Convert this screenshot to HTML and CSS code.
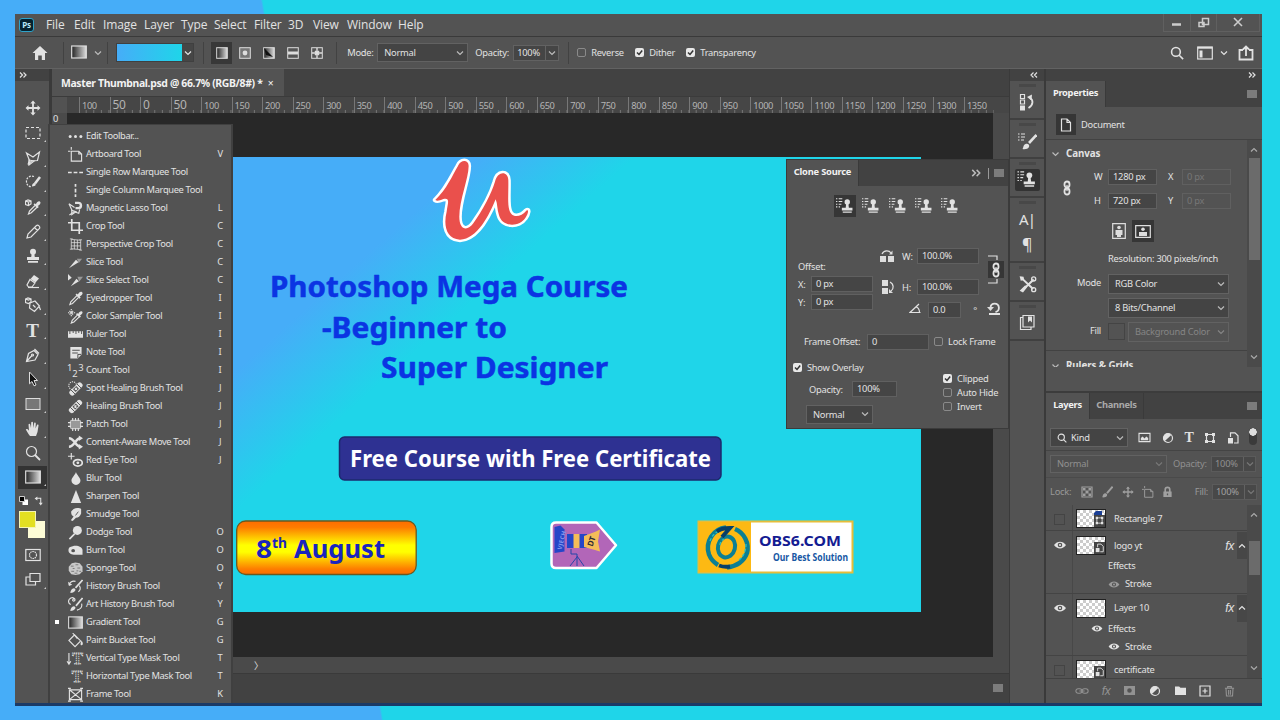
FILE: index.html
```html
<!DOCTYPE html>
<html lang="en">
<head>
  <meta charset="UTF-8" />
  <meta name="viewport" content="width=device-width, initial-scale=1.0" />
  <title>Master Thumbnal.psd</title>
  <link rel="stylesheet" href="styles.css">
</head>
<body>

<!-- Icon sprite -->
<svg class="sprite" width="0" height="0">
  <defs>
    <linearGradient id="gBw"><stop offset="0" stop-color="#222"/><stop offset="1" stop-color="#ddd"/></linearGradient>
    <pattern id="checker" width="6" height="6" patternUnits="userSpaceOnUse"><rect width="6" height="6" fill="#fff"/><path d="M0 0h3v3H0zM3 3h3v3H3z" fill="#ccc"/></pattern>
  </defs>
  <symbol id="chev" viewBox="0 0 8 8"><path d="M1 2.5l3 3 3-3" class="ln"/></symbol>
  <symbol id="up" viewBox="0 0 8 8"><path d="M1 5.5l3-3 3 3" class="ln"/></symbol>
  <symbol id="dbl-r" viewBox="0 0 8 8"><path d="M1 1.5L3.5 4 1 6.5M4.5 1.5L7 4 4.5 6.5" class="ln"/></symbol>
  <symbol id="dbl-l" viewBox="0 0 8 8"><path d="M3.5 1.5L1 4l2.5 2.5M7 1.5L4.5 4 7 6.5" class="ln"/></symbol>
  <symbol id="burger" viewBox="0 0 10 8"><path d="M0 1h10M0 3h10M0 5h10M0 7h10" class="ln"/></symbol>
  <symbol id="home" viewBox="0 0 16 16"><path d="M8 1l7.5 7H13v7H9.800v-4.500H6.200V15H3V8H.5z" class="fl"/></symbol>
  <symbol id="search" viewBox="0 0 16 16"><circle cx="6.8" cy="6.8" r="5" class="ln2"/><path d="M10.500 10.500L15 15" class="ln2"/></symbol>
  <symbol id="workspace" viewBox="0 0 16 16"><rect x=".7" y="2" width="14.6" height="12" class="ln"/><path d="M.7 2.8h14.6" class="ln2"/><path d="M2.500 5.500h3v7h-3z" class="fl"/></symbol>
  <symbol id="share" viewBox="0 0 16 16"><path d="M5 5H1.500v9.500h13V5H11M8 11V1.500M5 4.500l3-3 3 3" class="ln2"/></symbol>
  <symbol id="gradient" viewBox="0 0 16 16"><rect x=".7" y="2" width="14.6" height="12" fill="url(#gBw)" stroke="#ddd" stroke-width="1.2"/></symbol>
  <symbol id="move" viewBox="0 0 16 16"><path d="M8 2v12M2 8h12" class="ln2"/><path d="M8 .5l2.700 3H5.300zM8 15.500l2.700-3H5.300zM.5 8l3-2.700v5.400zM15.500 8l-3-2.700v5.400z" class="fl"/></symbol>
  <symbol id="marquee" viewBox="0 0 16 16"><rect x="1" y="2.5" width="14" height="11" class="ln" stroke-dasharray="3 2"/></symbol>
  <symbol id="lasso" viewBox="0 0 16 16"><path d="M1.500 3L8 7l6.500-5-2 8.500-6 .5L3 14.500l1.500-4z" class="ln"/><path d="M4 10l5 1-5 4z" class="ln"/></symbol>
  <symbol id="quicksel" viewBox="0 0 16 16"><path d="M9 2.500C5 1 1 4 1.500 8s3 5 5.500 4.500" class="ln" stroke-dasharray="2 1.2"/><path d="M7 12.500c0-2.500 1.500-4 3-3.200s.8 3.200-3 3.200z" class="fl"/><path d="M15 3L10 9.500" class="ln3"/></symbol>
  <symbol id="dropper" viewBox="0 0 16 16"><path d="M9.500 5L3 11.500 2 14.500l2.800-1.200L11.300 6.800" class="ln"/><path d="M8 4l1.300-1.300 1.200 1.100C11.500 1.500 13.500 0 15 1.200s0 3.500-2.500 4.600l1 1.200-1.300 1.200z" class="fl"/></symbol>
  <symbol id="sampler" viewBox="0 0 16 16"><path d="M10 6.500L4.500 12l-1 3 2.800-1.200L12 8.300" class="ln"/><path d="M8.500 5.500l1.300-1.300 1 1C12 3 13.700 1.700 15 2.700s0 3-2.200 4.200l1 1-1.300 1.300z" class="fl"/><path d="M3.500 0v8M0 4h8M1.500 2l4 4M5.500 2l-4 4" class="ln" stroke-dasharray="1.3 .8"/></symbol>
  <symbol id="dropper3d" viewBox="0 0 16 16"><path d="M10 6.500L4.500 12l-1 3 2.800-1.200L12 8.300" class="ln"/><path d="M8.500 5.500l1.300-1.300 1 1C12 3 13.700 1.700 15 2.700s0 3-2.200 4.200l1 1-1.300 1.300z" class="fl"/><path d="M.5 2l2.500-1 3 1v3L3.500 6.500.5 5.500zM.5 2l3 1 2.500-1M3.500 3v3" class="ln"/></symbol>
  <symbol id="pencil" viewBox="0 0 16 16"><path d="M2 14l1-4 8.500-8.500c1.500-1 4 1 3 3L6 13zM9.500 3.500l3 3" class="ln"/></symbol>
  <symbol id="stamp" viewBox="0 0 16 16"><circle cx="8" cy="3.8" r="3" class="fl"/><path d="M6.800 5h2.400l.6 4H14v3H2V9h4.200zM3 13h10v1.800H3z" class="fl"/></symbol>
  <symbol id="eraser" viewBox="0 0 16 16"><path d="M9 2l5 3.500-3.500 4-5-3.500z" class="fl"/><path d="M5 6.500l5 3.500-3 4H3.500L2 12z" class="ln"/><path d="M3 14.500h11" class="ln"/></symbol>
  <symbol id="bucket3d" viewBox="0 0 16 16"><path d="M5 6l5-2 4.500 5-5 5.500L4.500 11zM8 8l2.500 2.500M14 9l1.500 4" class="ln"/><path d="M.5 2l2.500-1 3 1v3L3.500 6.500.5 5.500zM.5 2l3 1 2.500-1" class="ln"/></symbol>
  <symbol id="pen" viewBox="0 0 16 16"><path d="M1.500 14.500l2-8L9 3.500l4 4-3 5.500zM1.500 14.500l5.500-6M9.500 2l4.500 4.500" class="ln"/><circle cx="7.5" cy="8" r="1" class="ln"/></symbol>
  <symbol id="arrow" viewBox="0 0 16 16"><path d="M4.500 1l8 8.500H9l2 4.500-2 .8-2-4.300-2.500 2.300z" fill="#111" stroke="#ddd"/></symbol>
  <symbol id="rect" viewBox="0 0 16 16"><rect x="1" y="2.5" width="14" height="11" fill="#777" stroke="#ddd"/></symbol>
  <symbol id="hand" viewBox="0 0 16 16"><path d="M5 15C3 12.500 2 10.500.8 8.500 1.500 7.500 3 8 4 9.800L3.500 3.500c.5-1 1.600-.8 1.800.2L6 7l.2-5.500c.4-1 1.600-1 1.800 0L8.300 7l.9-5c.5-.8 1.600-.5 1.600.5L10.500 7.500l1.600-3.700c.7-.6 1.600 0 1.400.9L12.500 11l-1.500 4z" class="fl"/></symbol>
  <symbol id="magnify" viewBox="0 0 16 16"><circle cx="6.5" cy="6.5" r="5" class="ln"/><path d="M10 10l5 5" class="ln2"/></symbol>
  <symbol id="mask" viewBox="0 0 16 16"><rect x=".8" y="2.5" width="14.4" height="11" class="ln"/><circle cx="8" cy="8" r="3.5" class="ln" stroke-dasharray="1.5 .7"/></symbol>
  <symbol id="screens" viewBox="0 0 16 16"><path d="M5 1.500h10v8H5zM4.500 5H1v8h9.500V10" class="ln"/></symbol>
  <symbol id="dots" viewBox="0 0 16 16"><circle cx="2.3" cy="8" r="1.6" class="fl"/><circle cx="8" cy="8" r="1.6" class="fl"/><circle cx="13.7" cy="8" r="1.6" class="fl"/></symbol>
  <symbol id="artboard" viewBox="0 0 16 16"><path d="M3.500 4.500h8l3 3v7.500h-11zM11.500 4.500v3h3M0 4.500h2.500M3.500 0v3" class="ln"/></symbol>
  <symbol id="row" viewBox="0 0 16 16"><path d="M0 8h4M6 8h4M12 8h4" class="ln2"/></symbol>
  <symbol id="col" viewBox="0 0 16 16"><path d="M8 1v3M8 6v4M8 12v3" class="ln2"/></symbol>
  <symbol id="maglasso" viewBox="0 0 16 16"><path d="M1 3l6 4M4.500 10.500L1 3M12.500 9l-1 4-5-1.500-5 3.500" class="ln"/><path d="M4 10l4.500 1.500-4.500 3z" class="ln"/><path d="M7.500 2H11a2.800 2.800 0 010 5.600H8" class="ln3"/></symbol>
  <symbol id="crop" viewBox="0 0 16 16"><path d="M4 0v12h12M0 4h12v12" class="ln2"/></symbol>
  <symbol id="persp" viewBox="0 0 16 16"><path d="M3.500 2.500l10 1v10l-10-1zM2 2h3M12 3h3M2 13h3M12 14h3M6.800 3v10M10 3v10M3.500 6h10M3.500 9.500h10" class="ln thin"/></symbol>
  <symbol id="slice" viewBox="0 0 16 16"><path d="M1 14L8.500 5l2.700 2.700z" class="fl"/><path d="M9.500 4H15l-3.500 4.500z" fill="#999"/></symbol>
  <symbol id="slicesel" viewBox="0 0 16 16"><path d="M3 14l6-8 2.700 2.700zM0 1l4 4-4 3z" class="fl"/><path d="M10 4h6l-4 5z" fill="#999"/></symbol>
  <symbol id="ruler" viewBox="0 0 16 16"><path d="M0 4.500h1.500v3h1v-3H5v2h1v-2h2v3h1v-3h2v2h1v-2h2v3h1v-3h1v7H0z" class="fl"/></symbol>
  <symbol id="note" viewBox="0 0 16 16"><path fill-rule="evenodd" d="M2.500 2h12v8l-4 4.500h-8zM4.500 5v1h8V5zM4.500 8v1h6V8z" class="fl"/><path d="M10.500 14v-4H14" stroke="#444" fill="none"/></symbol>
  <symbol id="spot" viewBox="0 0 16 16"><circle cx="5" cy="5" r="4.2" class="ln" stroke-dasharray="1.3 1"/><g transform="rotate(-45 8.5 8.5)"><rect x="0" y="5.5" width="17" height="6" rx="2.5" class="fl"/><path d="M4 5v7M13 5v7" stroke="#555"/><rect x="6" y="6.5" width="5" height="4" fill="#555"/><path d="M7 8.500h3M8.500 7v3" class="ln"/></g></symbol>
  <symbol id="heal" viewBox="0 0 16 16"><g transform="rotate(-45 8 8)"><rect x="-.5" y="5" width="17" height="6" rx="2.5" class="fl"/><path d="M3.500 4.500v7M12.500 4.500v7" stroke="#555"/><rect x="5.5" y="6" width="5" height="4" fill="#555"/><path d="M6.500 8h3M8 6.500v3" class="ln"/></g></symbol>
  <symbol id="patch" viewBox="0 0 16 16"><rect x="2.5" y="3.5" width="11" height="9" rx="1.5" fill="#999" stroke="#ddd"/><path d="M5 1v3M8 1v3M11 1v3M5 12v3M8 12v3M11 12v3M0 6h3M0 10h3M13 6h3M13 10h3" class="ln"/></symbol>
  <symbol id="shuffle" viewBox="0 0 16 16"><path d="M1 3.500c6 0 7 9 12 9M1 12.500c6 0 7-9 12-9" class="ln3"/><path d="M11.500 .5l4.500 3-4.500 3zM11.500 9.500l4.500 3-4.500 3z" class="fl"/></symbol>
  <symbol id="redeye" viewBox="0 0 16 16"><path d="M3.500 0v7M0 3.500h7" class="ln"/><ellipse cx="10.5" cy="10.5" rx="4.7" ry="3.5" class="ln2"/><circle cx="10.5" cy="10.5" r="1.5" class="fl"/></symbol>
  <symbol id="blur" viewBox="0 0 16 16"><path d="M8.500 1c1 3.500 4.800 6 4.800 9a4.800 4.800 0 01-9.600 0c0-3 3.800-5.500 4.800-9z" class="fl"/></symbol>
  <symbol id="sharpen" viewBox="0 0 16 16"><path d="M8.500 1l5.500 14H3z" class="fl"/></symbol>
  <symbol id="smudge" viewBox="0 0 16 16"><path d="M3 14l3-4c-2-1-3-3-2.500-5.500L6 2c3-1.500 7-.7 8 0v5c-1 3-3 4.500-5.500 4.500L5 15z" class="fl"/><path d="M8 9l3-4" stroke="#555"/></symbol>
  <symbol id="dodge" viewBox="0 0 16 16"><circle cx="10" cy="5.8" r="4.8" class="fl"/><path d="M7 9.500L1.500 15" class="ln2"/></symbol>
  <symbol id="burn" viewBox="0 0 16 16"><path fill-rule="evenodd" d="M5 3.500c5-1.500 10 1 10.500 4v5H9C5 13 .5 11.500.5 8S2.500 4 5 3.500zM5.500 6.500a2 1.700 0 100 3.400 2 1.700 0 000-3.400z" class="fl"/></symbol>
  <symbol id="sponge" viewBox="0 0 16 16"><path d="M4 2.500l4-1 4.500 1L15.500 6v5l-3 3-4.500.8L3.500 14 .8 10.500V6z" fill="#c9c9c9"/><path d="M3 5.500h3M8 4h3M5 8h2M10 7.500h3M3.500 11h3M9 10.500h2M7 13h3M12 11h2" stroke="#777"/></symbol>
  <symbol id="history" viewBox="0 0 16 16"><path d="M15.500 1L8 9.500" class="ln2"/><path d="M2.500 15c0-3 2-5.500 4.300-5S8 14.500 2.500 15z" class="fl"/><path d="M1 6c2-4 5-4 7-3.500M12 7c2 2.500 1 5.500-1 6.500" class="ln"/><path d="M0 3l1 4.500L4.500 6z" class="fl"/></symbol>
  <symbol id="arthistory" viewBox="0 0 16 16"><path d="M15.500 1L8.500 9.500" class="ln2"/><path d="M2.500 15c0-3 2-5.500 4.300-5S8 14.500 2.500 15z" class="fl"/><path d="M6 4.500C4 4 5 1.500 7.500 2M6 4.500c3-.5 1-5-3-3.500C-.5 3 0 7 3 8M14.500 7c1 4-1 6-5 7" class="ln"/></symbol>
  <symbol id="bucket" viewBox="0 0 16 16"><path d="M1 8l6-6 6.500 6.500-6 6zM5 0l5 6" class="ln"/><path d="M14.500 8c2 3 1.500 5 0 5s-1.500-2 0-5z" class="fl"/></symbol>
  <symbol id="frame" viewBox="0 0 16 16"><path d="M1.500 3h13v10.500h-13zM1.500 3l13 10.500M14.500 3l-13 10.500M0 1.500h3M13 1.500h3M0 15h3M13 15h3" class="ln"/></symbol>
  <symbol id="swap" viewBox="0 0 16 16"><path d="M5 3h7v9" class="ln2"/><path d="M6 0v7L1 3.500zM8.500 11h7L12 16z" class="fl"/></symbol>
  <symbol id="clonesrc" viewBox="0 0 22 20"><path d="M1 2h1.500M4 2h4M1 5h1.500M4 5h4M1 8h1.500M4 8h3M1 11h1.500M4 11h1.500" class="ln"/><circle cx="13.5" cy="5.5" r="3" class="fl"/><path d="M12.300 7h2.400l.6 5h4v3H7.500v-3h4.300zM8.500 16h10v1.500h-10z" class="fl"/></symbol>
  <symbol id="link" viewBox="0 0 10 16"><rect x="2.5" y="1.5" width="5" height="6" rx="2.5" class="ln2"/><rect x="2.5" y="8.5" width="5" height="6" rx="2.5" class="ln2"/><path d="M5 5v6" class="ln"/></symbol>
  <symbol id="hlink" viewBox="0 0 16 10"><rect x="1" y="2.5" width="7" height="5" rx="2.5" class="ln"/><rect x="8" y="2.5" width="7" height="5" rx="2.5" class="ln"/><path d="M5 5h6" class="ln"/></symbol>
  <symbol id="brush" viewBox="0 0 16 16"><path d="M15.500 1L8 9.500" class="ln3"/><path d="M1.500 15c1-1 .5-4 3-5s4.500 1 3.500 3-4 2.500-6.500 2z" class="fl"/></symbol>
  <symbol id="brushes" viewBox="0 0 20 18"><path d="M1 2h1.500M4 2h4M1 5h1.500M4 5h4M1 8h1.500M4 8h3" class="ln"/><path d="M19.500 3L12 11" class="ln3"/><path d="M5.500 17c1-1 .5-4 3-5s4.500 1 3.500 3-4 2.500-6.500 2z" class="fl"/></symbol>
  <symbol id="historypanel" viewBox="0 0 16 18"><path d="M1.500 1.500h4v4h-4zM1.500 7h4v4h-4z" class="ln"/><path d="M1 12.500h5v5H1z" class="fl"/><path d="M9.500 15c5-3 5-8 1.500-10" class="ln2"/><path d="M8 4l5-2.500-.5 6z" class="fl"/></symbol>
  <symbol id="toolspanel" viewBox="0 0 16 16"><path d="M3 3l10 9.500M13.500 4L3.500 13.500" class="ln2"/><path d="M1 1l3.500.5.5 3-3 .5zM1 14l5-5 1.500 2L4 15.500z" class="fl"/><circle cx="13.5" cy="3.5" r="1.8" class="ln"/><circle cx="13.5" cy="13" r="1.8" class="ln"/></symbol>
  <symbol id="library" viewBox="0 0 16 16"><path d="M4 1h11v11.500H4zM4 3H1.500v12H12v-2.500" class="ln"/><path d="M9 2h4v6l-2-2-2 2z" class="fl"/></symbol>
  <symbol id="page" viewBox="0 0 12 14"><path d="M1.500 1h5.500l3.500 3.500V13h-9zM7 1v3.500h3.500" class="ln"/></symbol>
  <symbol id="eye" viewBox="0 0 12 10"><path fill-rule="evenodd" d="M0 5c3-4.500 9-4.500 12 0-3 4.500-9 4.500-12 0zM6 2.700a2.300 2.300 0 100 4.600 2.300 2.300 0 000-4.600z" class="fl"/><circle cx="6" cy="5" r="1.1" class="fl"/></symbol>
  <symbol id="picture" viewBox="0 0 14 12"><path d="M1 1.500h12v9H1z" class="ln"/><path d="M3 9V6.500L5 5l2 2 2-2 2 1.500V9z" class="fl"/></symbol>
  <symbol id="adjust" viewBox="0 0 12 12"><circle cx="6" cy="6" r="4.5" class="ln"/><path d="M2.600 9.200A4.500 4.500 0 019.300 3z" class="fl"/></symbol>
  <symbol id="shape" viewBox="0 0 12 12"><path d="M2.500 2.500h7v7h-7z" class="ln"/><path d="M1 1h3v3H1zM8 1h3v3H8zM1 8h3v3H1zM8 8h3v3H8z" class="fl"/></symbol>
  <symbol id="smart" viewBox="0 0 12 12"><path d="M3.500 5V.8H8l3 3V11H7" class="ln"/><path d="M1 6h5v5.500H1z" class="fl"/></symbol>
  <symbol id="checks" viewBox="0 0 12 12"><path d="M1 1h10v10H1z" class="ln"/><path d="M2 2h2.500v2.500H2zM7.500 2H10v2.500H7.500zM4.500 4.500h3v3h-3zM2 7.500h2.500V10H2zM7.500 7.500H10V10H7.500z" class="fl"/></symbol>
  <symbol id="lock" viewBox="0 0 12 12"><path d="M3.500 6V3.500a2.500 2.500 0 015 0V6" class="ln2"/><path fill-rule="evenodd" d="M1.500 5.500h9v6h-9zM5.300 7.500v2h1.400v-2z" class="fl"/></symbol>
  <symbol id="folder" viewBox="0 0 14 12"><path d="M1 1.500h4.500L7 3h6v8H1z" class="fl"/></symbol>
  <symbol id="plus" viewBox="0 0 12 12"><path d="M1 1h10v10H1zM6 3.500v5M3.500 6h5" class="ln"/></symbol>
  <symbol id="trash" viewBox="0 0 12 12"><path d="M1 3h10M4 3V1.200h4V3M2.200 3.500l.5 8h6.600l.5-8M5 5v5M7 5v5" class="ln"/></symbol>
  <symbol id="maskbtn" viewBox="0 0 14 12"><path fill-rule="evenodd" d="M1 1h12v10H1zM7 3.500a2.500 2.500 0 100 5 2.500 2.500 0 000-5z" class="fl"/></symbol>
</svg>

<div class="window">
  <!-- Menu bar -->
  <header class="menubar">
    <span class="ps-logo">Ps</span>
    <nav class="menus">
      <span class="m-file">File</span><span class="m-edit">Edit</span><span class="m-image">Image</span><span class="m-layer">Layer</span><span class="m-type">Type</span><span class="m-select">Select</span><span class="m-filter">Filter</span><span class="m-3d">3D</span><span class="m-view">View</span><span class="m-window">Window</span><span class="m-help">Help</span>
    </nav>
    <div class="win-buttons">
      <span><svg width="26" height="17"><path d="M8 10.500h9" stroke="#ccc" stroke-width="2.500"/></svg></span>
      <span><svg width="25" height="17"><path d="M11.500 4.500h6v6h-6zM8 8.500h5v4H8z" fill="none" stroke="#ccc" stroke-width="1.500"/></svg></span>
      <span><svg width="42" height="17"><path d="M17 4l8 8M25 4l-8 8" stroke="#ccc" stroke-width="1.600"/></svg></span>
    </div>
  </header>

  <!-- Options bar -->
  <div class="options">
    <svg class="icon opt-home"><use href="#home"/></svg>
    <i class="sep"></i>
    <svg class="icon opt-tool"><use href="#gradient"/></svg>
    <svg class="chev opt-chev"><use href="#chev"/></svg>
    <i class="sep"></i>
    <div class="grad-swatch"><span></span><b><svg class="chev"><use href="#chev"/></svg></b></div>
    <i class="sep"></i>
    <div class="grad-types">
      <span class="on"><svg width="12" height="12"><rect x=".7" y=".7" width="10.6" height="10.6" fill="url(#gBw)" stroke="#ddd"/></svg></span>
      <span><svg width="12" height="12"><rect x=".7" y=".7" width="10.6" height="10.6" fill="#777" stroke="#ddd"/><circle cx="6" cy="6" r="2.4" fill="#ddd"/></svg></span>
      <span><svg width="12" height="12"><rect x=".7" y=".7" width="10.6" height="10.6" fill="url(#gBw)" stroke="#ddd"/><path d="M1 1l9 9-7-2z" fill="#111"/></svg></span>
      <span><svg width="12" height="12"><rect x=".7" y=".7" width="10.6" height="10.6" fill="#555" stroke="#ddd"/><path d="M1 6h10" stroke="#ddd" stroke-width="3"/></svg></span>
      <span><svg width="12" height="12"><rect x=".7" y=".7" width="10.6" height="10.6" fill="#555" stroke="#ddd"/><path d="M1 6h10M6 1v10M4 4l4 4M8 4L4 8" stroke="#ddd" stroke-width="1.400"/></svg></span>
    </div>
    <i class="sep"></i>
    <label class="opt-mode">Mode:</label>
    <div class="select opt-select">Normal<svg class="chev"><use href="#chev"/></svg></div>
    <label class="opt-opacity">Opacity:</label>
    <div class="combo"><span>100%</span><svg class="chev"><use href="#chev"/></svg></div>
    <i class="sep"></i>
    <div class="check opt-reverse"><i></i>Reverse</div>
    <div class="check checked opt-dither">Dither</div>
    <div class="check checked">Transparency</div>
    <div class="opt-right">
      <svg class="icon"><use href="#search"/></svg>
      <svg class="icon"><use href="#workspace"/></svg>
      <svg class="chev"><use href="#chev"/></svg>
      <svg class="icon"><use href="#share"/></svg>
    </div>
  </div>

  <div class="workspace">
    <!-- Toolbar -->
    <aside class="toolbar">
      <div class="dock-head"><svg class="dbl"><use href="#dbl-r"/></svg></div>
      <div class="tools">
        <span class="plain"><svg class="icon"><use href="#move"/></svg></span>
        <span><svg class="icon"><use href="#marquee"/></svg></span>
        <span><svg class="icon"><use href="#lasso"/></svg></span>
        <span><svg class="icon"><use href="#quicksel"/></svg></span>
        <span><svg class="icon"><use href="#dropper3d"/></svg></span>
        <span><svg class="icon"><use href="#pencil"/></svg></span>
        <span><svg class="icon"><use href="#stamp"/></svg></span>
        <span><svg class="icon"><use href="#eraser"/></svg></span>
        <span><svg class="icon"><use href="#bucket3d"/></svg></span>
        <span><em class="type-t">T</em></span>
        <span><svg class="icon"><use href="#pen"/></svg></span>
        <span><svg class="icon"><use href="#arrow"/></svg></span>
        <span><svg class="icon"><use href="#rect"/></svg></span>
        <span><svg class="icon"><use href="#hand"/></svg></span>
        <span class="plain"><svg class="icon"><use href="#magnify"/></svg></span>
        <span class="active"><svg class="icon"><use href="#gradient"/></svg></span>
      </div>
      <div class="mini">
        <svg width="10" height="10"><path d="M3.500 3.500h5.500v5.500H3.500z" fill="#fff"/><path d="M.5 .5h5v5h-5z" fill="#000" stroke="#ccc"/></svg>
        <svg width="9" height="10"><use href="#swap"/></svg>
      </div>
      <div class="swatches"><i class="fg"></i><i class="bg"></i></div>
      <div class="tools bottom-tools">
        <span class="plain"><svg class="icon"><use href="#mask"/></svg></span>
        <span><svg class="icon"><use href="#screens"/></svg></span>
      </div>
    </aside>

    <!-- Document -->
    <main class="document">
      <div class="tabs"><div class="tab">Master Thumbnal.psd @ 66.7% (RGB/8#) * <b>×</b></div></div>
      <div class="ruler">
        <i class="corner"></i>
        <div class="marks">
          <span>100</span><span class="big">50</span><span class="big">0</span><span class="big">50</span><span>100</span><span>150</span><span>200</span><span>250</span><span>300</span><span>350</span><span>400</span><span>450</span><span>500</span><span>550</span><span>600</span><span>650</span><span>700</span><span>750</span><span>800</span><span>850</span><span>900</span><span>950</span><span>1000</span><span>1050</span><span>1100</span><span>1150</span><span>1200</span><span>1250</span><span>1300</span><span>1350</span>
        </div>
      </div>
      <div class="view">
        <div class="vruler">0</div>
        <div class="canvas">
          <svg class="artboard" viewBox="141 157 780 455" width="780" height="455">
            <defs>
              <linearGradient id="sky" gradientUnits="userSpaceOnUse" x1="288" y1="324" x2="358" y2="403"><stop offset="0" stop-color="#46adf8"/><stop offset="1" stop-color="#1fd5e9"/></linearGradient>
              <linearGradient id="sun" x2="0" y2="1"><stop offset="0" stop-color="#fd6d00"/><stop offset=".12" stop-color="#fd7c00"/><stop offset=".45" stop-color="#ffff00"/><stop offset=".58" stop-color="#ffff00"/><stop offset=".9" stop-color="#fd7c00"/><stop offset="1" stop-color="#fd6d00"/></linearGradient>
            </defs>
            <rect x="141" y="157" width="780" height="455" fill="url(#sky)"/>
            <g transform="translate(230 150) scale(.3333)">
              <path d="M616 150C650 118 668 75 684 48C692 28 716 28 716 48C716 85 688 150 688 200C688 240 712 245 730 220C758 180 785 130 795 95C803 62 834 62 835 90C836 125 832 160 838 180C846 208 874 200 889 182C897 176 896 190 886 204C868 232 816 232 807 195C801 178 803 162 797 148C778 195 742 268 690 269C648 268 640 225 650 185C653 160 662 142 640 147C628 152 622 154 616 150Z" fill="#ea504c" stroke="#fff" stroke-width="15" stroke-linejoin="round" paint-order="stroke"/>
            </g>
            <g class="headline">
              <text x="270" y="297" textLength="358" lengthAdjust="spacingAndGlyphs">Photoshop Mega Course</text>
              <text x="322" y="338" textLength="185" lengthAdjust="spacingAndGlyphs">-Beginner to</text>
              <text x="381" y="378" textLength="227" lengthAdjust="spacingAndGlyphs">Super Designer</text>
            </g>
            <rect x="339.5" y="437" width="381.5" height="43" rx="5" fill="#2e3192" stroke="#1b2a6e" stroke-width="1.5"/>
            <text class="banner" x="350" y="467" textLength="361" lengthAdjust="spacingAndGlyphs">Free Course with Free Certificate</text>
            <rect x="236.7" y="521" width="179.5" height="53.5" rx="9" fill="url(#sun)" stroke="#6a5a20" stroke-width="1.3"/>
            <text class="date" x="256" y="558" textLength="16" lengthAdjust="spacingAndGlyphs">8</text>
            <text class="date sup" x="272" y="548" textLength="15" lengthAdjust="spacingAndGlyphs">th</text>
            <text class="date" x="294" y="558" textLength="91" lengthAdjust="spacingAndGlyphs">August</text>
            <!-- camera sticker -->
            <path d="M556 522.500h40.500l19.500 22.800-19.500 22.700H556c-3 0-4.500-1.500-4.500-4.500v-36.500c0-3 1.500-4.500 4.500-4.500z" fill="#b266b8" stroke="#fff" stroke-width="2.500" stroke-linejoin="round"/>
            <path d="M554.500 527l6-1.500 4 4v22l-10 1.500z" fill="#2546c8"/>
            <path d="M567 534h20v14h-20z" fill="#2546c8"/><path d="M573.500 534h6v14h-6z" fill="#f4bd58"/>
            <path d="M584 536l12-4.500 4-2-2 12 2 10-5-1.500-11-3z" fill="#f4bd58"/>
            <path d="M571 549v5h6v3l-7 9M577 556l7 10M577 557v9" stroke="#2546a8" fill="none"/>
            <text class="film" transform="translate(561.500 550) rotate(-76)" textLength="19">VJECH</text>
            <text class="tag" transform="translate(592.500 547) rotate(-72)">DT</text>
            <!-- OBS6 logo -->
            <rect x="698.5" y="521.5" width="154" height="51" fill="#fff" stroke="#e6bd3a" stroke-width="2"/>
            <path d="M699 522h52v50h-52z" fill="#fdb913"/>
            <g fill="none" stroke="#0b7f93">
              <ellipse cx="726.5" cy="547" rx="8.5" ry="10.5" stroke-width="4" transform="rotate(14 726.5 547)"/>
              <path d="M726 527.500a20 20.500 0 00-17 27c2 5 5 8 9 10.500" stroke-width="4.500"/>
              <path d="M735 529a20 20.500 0 0112 24c-3 8-9 13-20 14.500" stroke-width="4.500"/>
              <path d="M717 531.500c3-2.500 7-3.500 13-3.500l-8 9M719 565.500c4 1.500 7 1.700 11 1" stroke="#063f68" stroke-width="4"/>
              <path d="M710 541c2-5 4-7 7-9M746 544c0 6-2 12-7 16M720 545c0-3 2-5 4-6" stroke="#2fc0bb" stroke-width="1.300" stroke-dasharray="3 2"/>
            </g>
            <text class="brand" x="759" y="546" textLength="82" lengthAdjust="spacingAndGlyphs">OBS6.COM</text>
            <text class="tagline" x="773" y="561" textLength="75" lengthAdjust="spacingAndGlyphs">Our Best Solution</text>
          </svg>
        </div>
        <div class="vscroll"></div>
      </div>
      <div class="hscroll"><span>〉</span></div>
      <div class="status"><svg class="burger"><use href="#burger"/></svg></div>
    </main>

    <!-- Collapsed panels -->
    <aside class="dock">
      <div class="dock-head right"><svg class="dbl"><use href="#dbl-l"/></svg></div>
      <div class="dock-group"><svg width="16" height="18"><use href="#historypanel"/></svg></div>
      <div class="dock-group"><svg width="20" height="18"><use href="#brushes"/></svg></div>
      <div class="dock-group"><b><svg width="22" height="19"><use href="#clonesrc"/></svg></b></div>
      <div class="dock-group tall"><span class="char">A|</span><span class="para">¶</span></div>
      <div class="dock-group"><svg width="19" height="18"><use href="#toolspanel"/></svg></div>
      <div class="dock-group"><svg width="16" height="17"><use href="#library"/></svg></div>
    </aside>

    <!-- Properties and Layers -->
    <aside class="panels">
      <div class="dock-head right"><svg class="dbl"><use href="#dbl-r"/></svg></div>
      <section class="properties">
        <div class="panel-tabs"><span class="on w60">Properties</span><svg class="burger"><use href="#burger"/></svg></div>
        <div class="doc-row"><b><svg width="12" height="14"><use href="#page"/></svg></b>Document</div>
        <div class="prop-body">
          <div class="prop-main">
            <h3><svg class="chev"><use href="#chev"/></svg>Canvas</h3>
            <div class="size">
              <svg class="size-link" width="10" height="16"><use href="#link"/></svg>
              <div class="size-grid">
                <label>W</label><span class="field">1280 px</span><label>X</label><span class="field off">0 px</span>
                <label>H</label><span class="field">720 px</span><label>Y</label><span class="field off">0 px</span>
              </div>
            </div>
            <div class="orient">
              <svg width="14" height="16"><path d="M.7 .7h12.600v14.600H.7z" fill="none" stroke="#ddd" stroke-width="1.200"/><circle cx="7" cy="4.5" r="1.8" fill="#ddd"/><path d="M3.500 7h7v5H9v2H5v-2H3.500z" fill="#ddd"/></svg>
              <b><svg width="16" height="13"><path d="M.7 .7h14.600v11.600H.7z" fill="none" stroke="#ddd" stroke-width="1.200"/><circle cx="8" cy="4.3" r="1.8" fill="#ddd"/><path d="M4 7h8v4H4z" fill="#ddd"/></svg></b>
            </div>
            <p class="resolution">Resolution: 300 pixels/inch</p>
            <div class="prop-row"><label>Mode</label><div class="select">RGB Color<svg class="chev"><use href="#chev"/></svg></div></div>
            <div class="prop-row"><label></label><div class="select">8 Bits/Channel<svg class="chev"><use href="#chev"/></svg></div></div>
            <div class="prop-row"><label>Fill</label><i class="fill-box"></i><div class="select off">Background Color<svg class="chev"><use href="#chev"/></svg></div></div>
            <h3 class="rulers"><svg class="chev"><use href="#chev"/></svg>Rulers &amp; Grids</h3>
          </div>
          <div class="scroll"><svg class="chev"><use href="#up"/></svg><i></i><svg class="chev"><use href="#chev"/></svg></div>
        </div>
      </section>

      <section class="layers">
        <div class="panel-tabs"><span class="on w43">Layers</span><span class="w55">Channels</span><svg class="burger"><use href="#burger"/></svg></div>
        <div class="filter-row">
          <div class="select kind"><svg width="10" height="10"><use href="#search"/></svg>Kind<svg class="chev"><use href="#chev"/></svg></div>
          <svg width="13" height="11"><use href="#picture"/></svg>
          <svg width="12" height="12"><use href="#adjust"/></svg>
          <em class="type-s">T</em>
          <svg width="12" height="12"><use href="#shape"/></svg>
          <svg width="12" height="12"><use href="#smart"/></svg>
          <i class="toggle"></i>
        </div>
        <div class="blend-row">
          <div class="select">Normal<svg class="chev"><use href="#chev"/></svg></div>
          <label>Opacity:</label>
          <div class="combo"><span>100%</span><svg class="chev"><use href="#chev"/></svg></div>
        </div>
        <div class="lock-row">
          <label>Lock:</label>
          <svg width="12" height="12"><use href="#checks"/></svg>
          <svg width="12" height="12"><use href="#brush"/></svg>
          <svg width="12" height="12"><use href="#move"/></svg>
          <svg width="12" height="12"><use href="#artboard"/></svg>
          <svg width="11" height="12"><use href="#lock"/></svg>
          <label class="fill-label">Fill:</label>
          <div class="combo"><span>100%</span><svg class="chev"><use href="#chev"/></svg></div>
        </div>
        <div class="layer-area">
          <div class="layer-list">
            <div class="layer short">
              <div class="vis"><i></i></div>
              <div class="layer-main"><div class="layer-top"><svg class="thumb"><rect width="28" height="17" fill="url(#checker)"/><path d="M17 3l2-2h6v4h-8z" fill="#1b3f95"/><path d="M17 5h11v12H17z" fill="#444"/><svg x="18" y="6" width="9" height="9"><use href="#shape"/></svg></svg>Rectangle 7</div></div>
            </div>
            <div class="layer">
              <div class="vis"><svg width="12" height="10"><use href="#eye"/></svg></div>
              <div class="layer-main">
                <div class="layer-top"><svg class="thumb"><rect width="28" height="17" fill="url(#checker)"/><path d="M17 5h11v12H17z" fill="#444"/><svg x="18" y="6" width="9" height="10"><use href="#smart"/></svg></svg>logo yt<em>fx</em><b><svg class="chev"><use href="#up"/></svg></b></div>
                <div class="fx-row">Effects</div>
                <div class="fx-row stroke dim"><svg width="12" height="9"><use href="#eye"/></svg>Stroke</div>
              </div>
            </div>
            <div class="layer">
              <div class="vis"><svg width="12" height="10"><use href="#eye"/></svg></div>
              <div class="layer-main">
                <div class="layer-top"><svg class="thumb"><rect width="28" height="17" fill="url(#checker)"/></svg>Layer 10<em>fx</em><b><svg class="chev"><use href="#up"/></svg></b></div>
                <div class="fx-row eff"><svg width="12" height="9"><use href="#eye"/></svg>Effects</div>
                <div class="fx-row stroke"><svg width="12" height="9"><use href="#eye"/></svg>Stroke</div>
              </div>
            </div>
            <div class="layer short">
              <div class="vis"><i></i></div>
              <div class="layer-main"><div class="layer-top"><svg class="thumb"><rect width="28" height="17" fill="url(#checker)"/><path d="M17 5h11v12H17z" fill="#444"/><svg x="18" y="6" width="9" height="10"><use href="#smart"/></svg></svg>certificate</div></div>
            </div>
          </div>
          <div class="scroll"><svg class="chev"><use href="#up"/></svg><i></i><svg class="chev"><use href="#chev"/></svg></div>
        </div>
        <div class="layer-actions">
          <svg class="dimmed" width="14" height="10"><use href="#hlink"/></svg>
          <em class="dimmed">fx</em>
          <svg class="dimmed" width="13" height="11"><use href="#maskbtn"/></svg>
          <svg width="12" height="12"><use href="#adjust"/></svg>
          <svg width="13" height="11"><use href="#folder"/></svg>
          <svg width="12" height="12"><use href="#plus"/></svg>
          <svg class="dimmed" width="11" height="12"><use href="#trash"/></svg>
        </div>
      </section>
    </aside>
  </div>
</div>

<!-- Extra tools menu -->
<ul class="tool-menu">
  <li><svg class="icon"><use href="#dots"/></svg>Edit Toolbar...</li>
  <li><svg class="icon"><use href="#artboard"/></svg>Artboard Tool<kbd>V</kbd></li>
  <li><svg class="icon"><use href="#row"/></svg>Single Row Marquee Tool</li>
  <li><svg class="icon"><use href="#col"/></svg>Single Column Marquee Tool</li>
  <li><svg class="icon"><use href="#maglasso"/></svg>Magnetic Lasso Tool<kbd>L</kbd></li>
  <li><svg class="icon"><use href="#crop"/></svg>Crop Tool<kbd>C</kbd></li>
  <li><svg class="icon"><use href="#persp"/></svg>Perspective Crop Tool<kbd>C</kbd></li>
  <li><svg class="icon"><use href="#slice"/></svg>Slice Tool<kbd>C</kbd></li>
  <li><svg class="icon"><use href="#slicesel"/></svg>Slice Select Tool<kbd>C</kbd></li>
  <li><svg class="icon"><use href="#dropper"/></svg>Eyedropper Tool<kbd>I</kbd></li>
  <li><svg class="icon"><use href="#sampler"/></svg>Color Sampler Tool<kbd>I</kbd></li>
  <li><svg class="icon"><use href="#ruler"/></svg>Ruler Tool<kbd>I</kbd></li>
  <li><svg class="icon"><use href="#note"/></svg>Note Tool<kbd>I</kbd></li>
  <li><svg class="icon count" viewBox="0 0 16 16"><text x="-1" y="9">1</text><text x="4.5" y="14.5">2</text><text x="11" y="8">3</text></svg>Count Tool<kbd>I</kbd></li>
  <li><svg class="icon"><use href="#spot"/></svg>Spot Healing Brush Tool<kbd>J</kbd></li>
  <li><svg class="icon"><use href="#heal"/></svg>Healing Brush Tool<kbd>J</kbd></li>
  <li><svg class="icon"><use href="#patch"/></svg>Patch Tool<kbd>J</kbd></li>
  <li><svg class="icon"><use href="#shuffle"/></svg>Content-Aware Move Tool<kbd>J</kbd></li>
  <li><svg class="icon"><use href="#redeye"/></svg>Red Eye Tool<kbd>J</kbd></li>
  <li><svg class="icon"><use href="#blur"/></svg>Blur Tool</li>
  <li><svg class="icon"><use href="#sharpen"/></svg>Sharpen Tool</li>
  <li><svg class="icon"><use href="#smudge"/></svg>Smudge Tool</li>
  <li><svg class="icon"><use href="#dodge"/></svg>Dodge Tool<kbd>O</kbd></li>
  <li><svg class="icon"><use href="#burn"/></svg>Burn Tool<kbd>O</kbd></li>
  <li><svg class="icon"><use href="#sponge"/></svg>Sponge Tool<kbd>O</kbd></li>
  <li><svg class="icon"><use href="#history"/></svg>History Brush Tool<kbd>Y</kbd></li>
  <li><svg class="icon"><use href="#arthistory"/></svg>Art History Brush Tool<kbd>Y</kbd></li>
  <li class="current"><svg class="icon"><use href="#gradient"/></svg>Gradient Tool<kbd>G</kbd></li>
  <li><svg class="icon"><use href="#bucket"/></svg>Paint Bucket Tool<kbd>G</kbd></li>
  <li><svg class="icon tmask" viewBox="0 0 16 16"><path d="M1 2v11M-1 11l2 3 2-3" class="ln"/><text x="4.5" y="14">T</text></svg>Vertical Type Mask Tool<kbd>T</kbd></li>
  <li><svg class="icon tmask" viewBox="0 0 16 16"><text x="4" y="14">T</text></svg>Horizontal Type Mask Tool<kbd>T</kbd></li>
  <li><svg class="icon"><use href="#frame"/></svg>Frame Tool<kbd>K</kbd></li>
</ul>

<!-- Clone Source panel -->
<section class="clone">
  <div class="panel-tabs"><span class="on w72">Clone Source</span><svg class="dbl"><use href="#dbl-r"/></svg><i></i><svg class="burger"><use href="#burger"/></svg></div>
  <div class="sources">
    <b><svg width="22" height="20"><use href="#clonesrc"/></svg></b>
    <svg width="22" height="20"><use href="#clonesrc"/></svg>
    <svg width="22" height="20"><use href="#clonesrc"/></svg>
    <svg width="22" height="20"><use href="#clonesrc"/></svg>
    <svg width="22" height="20"><use href="#clonesrc"/></svg>
  </div>
  <div class="transform">
    <div class="offset">
      <p>Offset:</p>
      <div><label>X:</label><span class="field">0 px</span></div>
      <div><label>Y:</label><span class="field">0 px</span></div>
    </div>
    <div class="scale">
      <div><svg width="15" height="14"><path d="M0 7h6v6H0zM8 7h6v6H8z" fill="#ddd"/><path d="M2 5c2-4 7-4 9-1" class="ln"/><path d="M12.500 1.500v4H9z" fill="#ddd"/></svg><label>W:</label><span class="field">100.0%</span></div>
      <div><svg width="15" height="14"><path d="M2 0h6v6H2zM2 8h6v6H2z" fill="#ddd"/><path d="M10 2c4 2 4 7 1 9" class="ln"/><path d="M9 9v4h4z" fill="#ddd"/></svg><label>H:</label><span class="field">100.0%</span></div>
      <div class="rotate"><svg width="12" height="11"><path d="M11.500 9.500H1L10 1M7.500 4c2 1 3 3 3 5.500" class="ln"/></svg><span class="field">0.0</span><label>°</label></div>
    </div>
    <div class="chain">
      <svg width="10" height="5"><path d="M0 1h9v4" class="ln"/></svg>
      <b><svg width="10" height="16"><use href="#link"/></svg></b>
      <svg width="10" height="5"><path d="M0 4h9V0" class="ln"/></svg>
      <svg class="reset" width="14" height="13"><path d="M4 9.500M3.500 5.500a4.200 4.200 0 115 4.500M2 12h11" class="ln2"/><path d="M0 5h7L3.500 9z" fill="#ddd"/></svg>
    </div>
  </div>
  <div class="frame-row"><label>Frame Offset:</label><span class="field">0</span><div class="check"><i></i>Lock Frame</div></div>
  <div class="overlay">
    <div class="overlay-left">
      <div class="check checked">Show Overlay</div>
      <div class="overlay-op"><label>Opacity:</label><span class="field">100%</span></div>
      <div class="select">Normal<svg class="chev"><use href="#chev"/></svg></div>
    </div>
    <div class="overlay-right">
      <div class="check checked">Clipped</div>
      <div class="check"><i></i>Auto Hide</div>
      <div class="check"><i></i>Invert</div>
    </div>
  </div>
</section>

<script>
  // Checked boxes get their mark here so the markup stays short
  document.querySelectorAll('.check.checked').forEach(item => {
    item.insertAdjacentHTML('afterbegin', '<i><svg width="9" height="9"><path d="M2 4.500l2 2 3.200-4" fill="none" stroke="#333" stroke-width="1.500"/></svg></i>');
  });
</script>

</body>
</html>
```
FILE: styles.css
```css
* {
  box-sizing: border-box;
}

body {
  margin: 0;
  width: 1280px;
  height: 720px;
  padding: 14px 18px 14px 15px;
  overflow: hidden;
  background: linear-gradient(80.5deg, #46adf8 376px, #1fd5e9 378px);
  font-family: "Noto Sans", "Open Sans", sans-serif;
  font-size: 9.3px;
  letter-spacing: -0.24px;
  line-height: 1;
  color: #e2e2e2;
  white-space: nowrap;
}

svg {
  flex: none;
  display: block;
}

.sprite {
  position: absolute;
}

.ln, .ln2, .ln3 {
  fill: none;
  stroke: currentColor;
  stroke-width: 1.2;
}

.ln2 { stroke-width: 1.8; }
.ln3 { stroke-width: 2.6; }
.thin { stroke-width: 0.8; }
.fl { fill: currentColor; }

.icon { width: 16px; height: 16px; }
.chev { width: 8px; height: 8px; }
.dbl { width: 8px; height: 8px; }
.burger { width: 10px; height: 8px; color: #b5b5b5; }

b, h3 { font-weight: 700; }
h3, p { margin: 0; }

.window {
  display: flex;
  flex-direction: column;
  width: 1247px;
  height: 692px;
  background: #3a3a3a;
  border-bottom: 3px solid #1b3a66;
}

/* Menu bar */
.menubar {
  display: flex;
  height: 22px;
  background: #535353;
}

.ps-logo {
  width: 15px;
  height: 14px;
  margin: 4px 0 0 4px;
  border: 1px solid #2fa3c9;
  border-radius: 3px;
  background: #06222f;
  color: #b9e8fa;
  font-size: 8px;
  font-weight: 700;
  line-height: 12px;
  text-align: center;
}

.menus {
  display: flex;
  margin-left: 12px;
  font-family: "Open Sans", sans-serif;
  font-size: 12px;
  letter-spacing: -0.1px;
  line-height: 22px;
}

.m-file { width: 28px; }
.m-edit { width: 29px; }
.m-image { width: 41px; }
.m-layer { width: 37px; }
.m-type { width: 33px; }
.m-select { width: 40px; }
.m-filter { width: 34px; }
.m-3d { width: 25px; }
.m-view { width: 34px; }
.m-window { width: 51px; }

.win-buttons {
  display: flex;
  height: 18px;
  margin-left: auto;
  margin-right: 2px;
  border: 1px solid #606060;
  border-top: 0;
}

.win-buttons span + span { border-left: 1px solid #606060; }

/* Options bar */
.options {
  display: flex;
  align-items: center;
  height: 32px;
  margin-top: 1px;
  background: #535353;
  border-bottom: 1px solid #626262;
}

.sep {
  width: 1px;
  height: 22px;
  background: #424242;
}

.opt-home { margin: 0 15px 0 17px; }
.opt-tool { margin: -2px 7px 0 7px; }
.opt-chev { margin-right: 5px; color: #bbb; }

.grad-swatch {
  display: flex;
  width: 78px;
  height: 19px;
  margin: 0 9px 0 8px;
  border: 1px solid #404040;
  background: #464646;
}

.grad-swatch span {
  width: 65px;
  background: linear-gradient(90deg, #46adf8, #1fd5e9);
}

.grad-swatch b {
  margin: 5px 0 0 2px;
}

.grad-types {
  display: flex;
  gap: 2.8px;
  margin: 0 9px 0 7px;
}

.grad-types span {
  display: flex;
  align-items: center;
  justify-content: center;
  width: 21px;
  height: 22px;
}

.grad-types .on { background: #383838; }

.opt-mode { width: 30px; margin-left: 10px; }

.select {
  display: flex;
  align-items: center;
  justify-content: space-between;
  height: 19px;
  padding: 0 3px 0 6px;
  background: #444;
  border: 1px solid #626262;
}

.select .chev { color: #bbb; }

.opt-select { width: 91px; margin-right: 7px; }
.opt-opacity { width: 38px; }

.combo {
  display: flex;
  width: 46px;
  height: 16px;
  background: #454545;
  border: 1px solid #626262;
}

.combo span {
  width: 32px;
  padding-left: 3px;
  border-right: 1px solid #626262;
  line-height: 14px;
}

.combo .chev { margin: 3px 0 0 2px; color: #bbb; }

.options .combo { margin-right: 9px; }

.check {
  display: flex;
  align-items: center;
  gap: 5px;
}

.check i {
  width: 9px;
  height: 9px;
  border: 1px solid #8a8a8a;
  border-radius: 2px;
}

.check.checked i {
  border: 0;
  background: #e8e8e8;
}

.opt-reverse { width: 58px; margin-left: 8px; }
.opt-dither { width: 51px; }

.opt-right {
  display: flex;
  align-items: center;
  margin-left: auto;
  margin-right: 8px;
}

.opt-right .icon:nth-child(1) { width: 14px; margin-right: 13px; }
.opt-right .chev { margin: 0 10px 0 7px; }

/* Workspace */
.workspace {
  display: flex;
  flex: 1;
}

.dock-head {
  display: flex;
  height: 12px;
  padding: 2px 4px;
  background: #424242;
}

.dock-head.right { justify-content: flex-end; padding-right: 6px; }

.toolbar {
  width: 34px;
  margin-right: 3px;
  background: #535353;
}

.tools {
  display: flex;
  flex-direction: column;
  padding: 15px 0 0 3px;
}

.tools span {
  position: relative;
  display: flex;
  align-items: center;
  justify-content: center;
  width: 29px;
  height: 24.65px;
}

.tools span::after {
  content: "";
  position: absolute;
  right: 1px;
  bottom: 3px;
  border: 1.5px solid #ccc;
  border-top-color: transparent;
  border-left-color: transparent;
}

.tools .plain::after { display: none; }

.tools .active { background: #333; height: 23px; }

.type-t, .type-s {
  font-family: "Liberation Serif", serif;
  font-style: normal;
  font-weight: 700;
  font-size: 19px;
}

.type-s { font-size: 14px; }

.mini {
  display: flex;
  justify-content: space-between;
  padding: 7px 6px 0 4px;
  height: 22px;
}

.swatches {
  display: flex;
  padding-left: 4px;
  height: 29px;
}

.swatches i {
  width: 17px;
  height: 17px;
}

.swatches .fg {
  z-index: 1;
  background: #e3df22;
  border: 1px solid #f4f4b4;
}

.swatches .bg {
  margin: 10px 0 0 -8px;
  background: #fdfcd6;
}

.bottom-tools { padding-top: 3px; }

/* Document */
.document {
  display: flex;
  flex-direction: column;
  width: 957px;
}

.tabs {
  display: flex;
  height: 27px;
  background: #424242;
}

.tab {
  width: 232px;
  padding: 0 9px;
  background: #535353;
  font-size: 10.4px;
  font-weight: 700;
  letter-spacing: -0.33px;
  line-height: 28px;
  color: #f2f2f2;
}

.tab b { margin-left: 3px; font-weight: 400; }

.ruler {
  display: flex;
  height: 17px;
  background: #464646;
  border-top: 1px solid #3b3b3b;
  color: #b4b4b4;
}

.corner {
  width: 15px;
  margin-right: 12px;
  background: #525252;
}

.marks {
  display: flex;
}

.marks span {
  width: 30.52px;
  padding: 4px 0 0 2px;
  border-left: 1px solid #777;
  background: linear-gradient(90deg, transparent 6px, #777 6px, #777 7px, transparent 7px) 0 100% / 7.6px 3px repeat-x;
  letter-spacing: -0.4px;
}

.marks .big { font-size: 12px; padding-top: 2px; }

.view {
  display: flex;
  height: 544px;
}

.vruler {
  width: 15px;
  padding: 1px 8px 0 0;
  background: #4a4a4a;
  text-align: center;
}

.canvas {
  width: 926px;
  padding: 44px 0 0 74px;
  background: #282828;
}

.vscroll { flex: 1; background: #4a4a4a; }

.hscroll {
  height: 17px;
  padding-left: 202px;
  background: #4a4a4a;
  border-bottom: 1px solid #3a3a3a;
  font-family: "Noto Sans CJK SC", sans-serif;
  line-height: 16px;
}

.status {
  display: flex;
  justify-content: flex-end;
  flex: 1;
  padding: 10px 6px 0 0;
  background: #424242;
}

.artboard text {
  font-family: "Noto Sans", sans-serif;
  font-weight: 700;
  letter-spacing: 0;
}

.headline text {
  font-size: 29px;
  fill: #0b34e3;
  stroke: #0b34e3;
  stroke-width: 0.5;
  stroke-linejoin: round;
}

.artboard .banner { font-size: 23px; fill: #fff; }
.artboard .date { font-size: 25px; fill: #1a25bd; }
.artboard .sup { font-size: 15px; }
.artboard .brand { font-size: 15px; fill: #141c92; }
.artboard .tagline { font-size: 10.5px; fill: #1858a4; }
.artboard .film { font-size: 6px; fill: #8799ee; }
.artboard .tag { font-size: 8px; fill: #2d2c35; }

/* Collapsed dock */
.dock {
  width: 34px;
  margin: 0 2px 0 1px;
  background: #535353;
}

.dock-group {
  position: relative;
  display: flex;
  align-items: center;
  justify-content: center;
  height: 39px;
  padding-top: 4px;
  border-bottom: 2px solid #404040;
}

.dock-group::before {
  content: "";
  position: absolute;
  top: 3px;
  left: 9px;
  width: 17px;
  height: 3px;
  background: #484848;
}

.dock-group b {
  display: flex;
  align-items: center;
  justify-content: center;
  width: 25px;
  height: 22px;
  border-radius: 2px;
  background: #333;
}

.dock-group.tall {
  flex-direction: column;
  gap: 9px;
  height: 65px;
}

.char { font-size: 15px; line-height: 16px; letter-spacing: -1px; }
.para { font-size: 16px; line-height: 17px; }

/* Right panels */
.panels {
  width: 216px;
  background: #3c3c3c;
}

.panel-tabs {
  display: flex;
  align-items: center;
  height: 26px;
  background: #424242;
}

.panel-tabs span {
  align-self: stretch;
  line-height: 24px;
  color: #a9a9a9;
  text-align: center;
  font-weight: 700;
  letter-spacing: -0.3px;
  border-right: 1px solid #3a3a3a;
}

.panel-tabs .on { background: #535353; color: #f2f2f2; }
.panel-tabs .burger { margin-left: auto; margin-right: 5px; }
.w60 { width: 60px; }
.w43 { width: 44px; }
.w55 { width: 54px; }
.w72 { width: 72px; }

.properties {
  height: 310px;
  background: #535353;
}

.doc-row {
  display: flex;
  align-items: center;
  gap: 5px;
  height: 33px;
  padding: 3px 0 0 10px;
  border-bottom: 1px solid #424242;
}

.doc-row b, .orient b, .chain b, .sources b {
  display: flex;
  align-items: center;
  justify-content: center;
  background: #363636;
}

.doc-row b { width: 20px; height: 21px; }

.prop-body {
  display: flex;
  height: 227px;
  overflow: hidden;
}

.prop-main { width: 201px; overflow: hidden; }

.prop-main h3 {
  display: flex;
  align-items: center;
  gap: 6px;
  height: 26px;
  padding: 2px 0 0 5px;
  font-size: 9.8px;
  letter-spacing: -0.1px;
}

.prop-main h3 .chev { width: 9px; color: #bbb; }

.size { display: flex; height: 50px; padding-top: 3px; }
.size-link { margin: 11px 15px 0 16px; }

.size-grid {
  display: grid;
  grid-template-columns: 21px 49px 25px 49px;
  grid-template-rows: 16px 16px;
  row-gap: 8px;
  line-height: 16px;
}

.size-grid label { padding-left: 7px; }
.size-grid label:nth-of-type(even) { padding-left: 11px; }

.field {
  display: block;
  padding-left: 4px;
  background: #454545;
  border: 1px solid #606060;
  line-height: 14px;
  height: 16px;
}

.field.off {
  background: none;
  color: #777;
}

.orient {
  display: flex;
  align-items: center;
  gap: 6px;
  height: 30px;
  padding-left: 66px;
}

.orient b { width: 22px; height: 22px; }

.resolution {
  height: 28px;
  padding: 8px 0 0 62px;
}

.prop-row {
  display: flex;
  height: 24px;
}

.prop-row label {
  width: 62px;
  padding: 4px 7px 0 0;
  text-align: right;
}

.prop-row .select { flex: 1; height: 20px; margin-right: 18px; }

.prop-row .off, .prop-row .off .chev { background: none; color: #858585; }

.fill-box {
  width: 17px;
  height: 17px;
  margin: 1px 3px 0 0;
  border: 1px solid #444;
}

.prop-main .rulers {
  margin-top: 4px;
  border-top: 1px solid #424242;
  height: 28px;
}

.scroll {
  display: flex;
  flex-direction: column;
  align-items: center;
  width: 14px;
  padding: 6px 0;
  background: #4a4a4a;
}

.scroll i {
  width: 11px;
  height: 102px;
  margin: 4px 0 auto;
  background: #6b6b6b;
}

.scroll .chev { color: #aaa; }

/* Layers */
.layers {
  height: 310px;
  margin-top: 2px;
  background: #535353;
}

.filter-row {
  display: flex;
  align-items: center;
  height: 32px;
  padding: 6px 0 0 4px;
  gap: 10.8px;
  border-bottom: 1px solid #444;
}

.kind { width: 78px; gap: 4px; margin-right: -1px; }
.kind .chev { margin-left: auto; }

.toggle {
  width: 8px;
  height: 17px;
  margin: -3px 0 0 -1px;
  border-radius: 4px;
  background: radial-gradient(circle at 4px 4px, #ddd 3.5px, #3a3a3a 4px);
}

.blend-row, .lock-row {
  display: flex;
  align-items: center;
  height: 27px;
  padding-left: 4px;
  color: #909090;
  border-bottom: 1px solid #4a4a4a;
}

.blend-row .select { width: 117px; height: 18px; margin-right: 6px; background: #505050; }
.blend-row label { width: 38px; }
.blend-row .chev, .lock-row .combo .chev { color: #777; }

.lock-row { gap: 8.2px; color: #a0a0a0; height: 27px; border-bottom: 0; }
.lock-row label { width: 23px; color: #999; }
.lock-row .fill-label { width: 18px; margin: 0 -9px 0 auto; }
.lock-row .combo, .blend-row .combo { width: 45px; border-color: #5b5b5b; background: #484848; }
.lock-row .combo { margin-right: 5px; }

.layer-area {
  display: flex;
  height: 173px;
  overflow: hidden;
}

.layer-list { width: 201px; }

.layer {
  display: flex;
  height: 62.5px;
  border-bottom: 1px solid #444;
}

.layer.short { height: 26px; }

.vis {
  width: 27px;
  padding: 9px 0 0 8px;
  border-right: 1px solid #484848;
}

.vis i {
  display: block;
  width: 11px;
  height: 11px;
  border: 1px solid #444;
}

.layer-main { flex: 1; }

.layer-top {
  display: flex;
  align-items: center;
  height: 29px;
  padding-left: 4px;
}

.short .layer-top { height: 27px; }

.thumb {
  width: 28px;
  height: 17px;
  margin-right: 9px;
  outline: 1px solid #222;
}

.layer-top em, .layer-actions em {
  margin-left: auto;
  font-family: "Liberation Sans", sans-serif;
  font-size: 12px;
}

.layer-top b {
  display: flex;
  align-items: center;
  width: 10px;
  height: 27px;
  margin-left: 3px;
  padding-left: 1px;
  background: #474747;
}

.fx-row {
  display: flex;
  align-items: center;
  gap: 5px;
  height: 12px;
  padding-left: 35px;
}

.fx-row.stroke { height: 24px; }
.fx-row.eff { padding-left: 18px; }
.dim svg { color: #999; }

.layers .scroll { padding: 6px 0; }
.layers .scroll i { height: 34px; margin-top: 22px; }

.layer-actions {
  display: flex;
  align-items: center;
  height: 24px;
  gap: 12.7px;
  padding-left: 29px;
  border-top: 1px solid #424242;
}

.layer-actions em { margin: 0; }
.dimmed { color: #929292; }

/* Extra tools menu */
.tool-menu {
  position: absolute;
  left: 48px;
  top: 124px;
  width: 185px;
  height: 579px;
  margin: 0;
  padding: 2px 7px 0 20px;
  list-style: none;
  background: #535353;
  border: 1px solid #404040;
  border-width: 1px 2px 0 2px;
  letter-spacing: -0.35px;
}

.tool-menu li {
  display: flex;
  align-items: center;
  height: 18px;
}

.tool-menu .icon { width: 15px; height: 15px; margin: 0 3px 0 -2px; overflow: visible; }

.tool-menu kbd {
  width: 8px;
  margin-left: auto;
  font-family: inherit;
  font-size: inherit;
  text-align: center;
}

.tool-menu .current::before {
  content: "";
  width: 4px;
  height: 4px;
  margin: 0 11px 0 -15px;
  background: #fff;
}

.count text { font-size: 10px; fill: #e2e2e2; }
.tmask text { font-family: "Liberation Serif", serif; font-weight: 700; font-size: 17px; fill: #555; stroke: #ddd; stroke-width: 0.9; stroke-dasharray: 1.5 0.8; }

/* Clone Source */
.clone {
  position: absolute;
  left: 786px;
  top: 159px;
  width: 223px;
  height: 270px;
  background: #535353;
  border: 1px solid #3b3b3b;
}

.clone .panel-tabs span { letter-spacing: -0.2px; }

.clone .panel-tabs i {
  width: 1px;
  height: 11px;
  margin: 0 5px 0 7px;
  background: #999;
}

.clone .dbl { width: 10px; height: 10px; margin-left: auto; color: #bbb; }
.clone .panel-tabs .burger { margin-left: 0; margin-right: 4px; }

.sources {
  display: flex;
  align-items: center;
  gap: 4.3px;
  height: 39px;
  padding: 0 0 0 47px;
}

.sources b { width: 22px; height: 22px; }
.sources svg { height: 18px; }

.transform {
  display: flex;
  height: 94px;
  padding: 23px 0 0 11px;
}

.offset { width: 76px; }
.offset p { height: 28px; padding-top: 14px; }
.offset div { display: flex; height: 18px; }
.offset label { width: 13px; padding-top: 4px; }
.offset .field { width: 62px; }

.scale { width: 112px; padding-left: 6px; }
.scale div { display: flex; height: 30.5px; }
.scale svg { margin-top: 1px; }
.scale label { width: 15px; margin-left: 7px; padding-top: 4px; }
.scale div .field { width: 62px; }
.scale .rotate { height: 18px; margin: -7px 0 0 29px; }
.scale .rotate .field { width: 38px; margin-left: 7px; }
.scale .rotate label { margin-left: 12px; }

.chain { padding: 7px 0 0 2px; }
.chain b { width: 16px; height: 17px; margin: 1px 0; }
.chain .reset { margin: 18px 0 0 -1px; }

.frame-row {
  display: flex;
  align-items: center;
  height: 46px;
  padding-left: 17px;
}

.frame-row label { width: 63px; }
.frame-row .field { width: 62px; margin-right: 5px; }

.overlay { display: flex; margin-top: -2.5px; }
.overlay-left { width: 156px; padding: 0 0 0 6px; }
.overlay-op { display: flex; align-items: center; height: 23px; margin: 6px 0 0 16px; }
.overlay-op label { width: 43px; }
.overlay-op .field { width: 45px; }
.overlay-left > .select { width: 67px; margin: 4px 0 0 13px; }
.overlay-right { display: flex; flex-direction: column; gap: 5px; padding-top: 11px; }
```
